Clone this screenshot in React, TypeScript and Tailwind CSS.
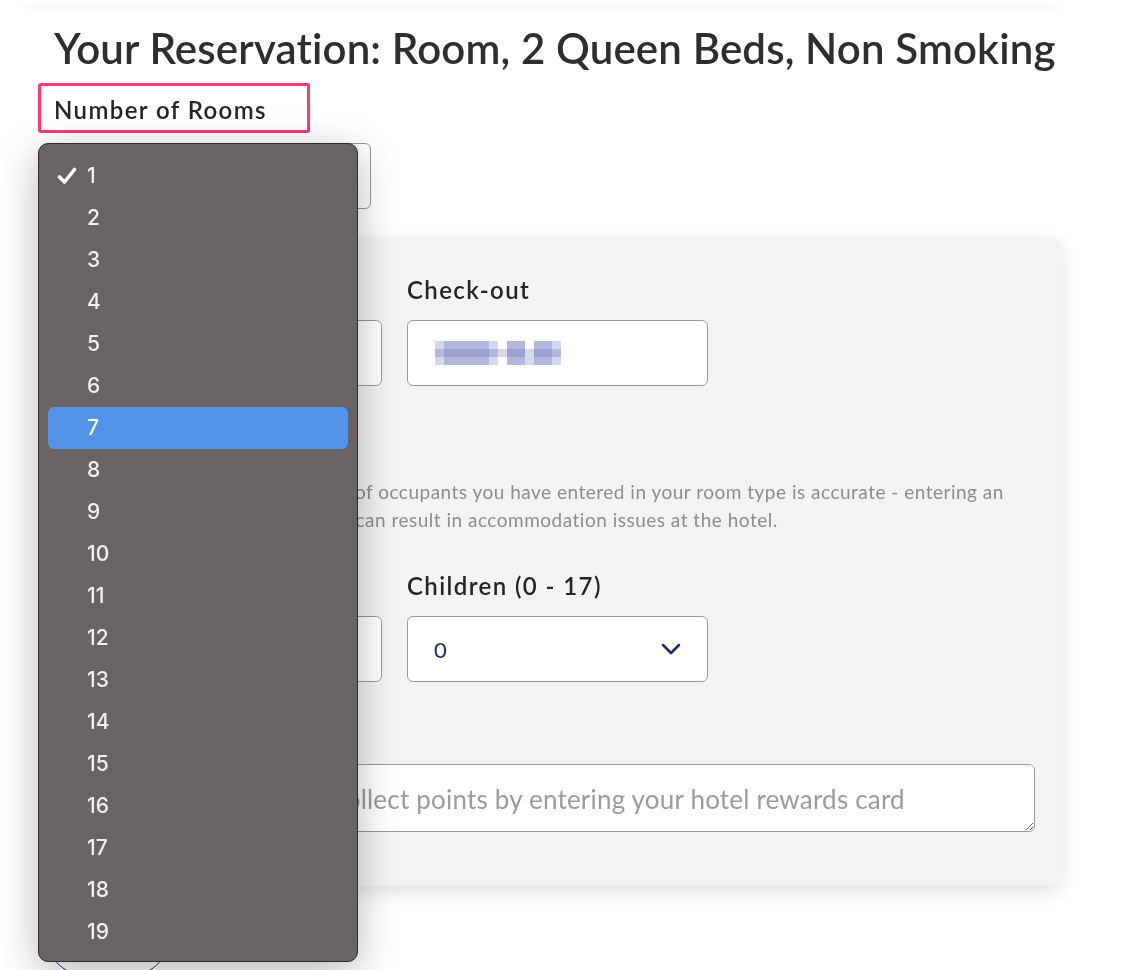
const rooms = Array.from({ length: 19 }, (_, i) => i + 1)

// mosaic used in place of the blurred check-out date
const mosaic = [
  [1, 2, 2, 2, 2, 2, 1, 0, 2, 2, 0, 2, 2, 1],
  [2, 3, 3, 3, 3, 3, 2, 1, 3, 3, 1, 3, 3, 2],
  [1, 2, 2, 2, 2, 2, 1, 0, 2, 2, 1, 2, 2, 1],
]
const shade = ["bg-transparent", "bg-[#d6d8ee]", "bg-[#b3b7de]", "bg-[#9ca1d1]"]

function Label({ children, className = "" }: { children: React.ReactNode; className?: string }) {
  return (
    <div className={"text-[24px] font-semibold leading-[28px] tracking-[1.4px] text-[#252525] " + className}>
      {children}
    </div>
  )
}

function Field({ label, children }: { label: string; children: React.ReactNode }) {
  return (
    <div className="w-[301px]">
      <Label>{label}</Label>
      <div className="mt-[16px]">{children}</div>
    </div>
  )
}

function Chevron() {
  return (
    <svg width="20" height="12" viewBox="0 0 20 12">
      <path d="M2 2 L10 10 L18 2" fill="none" stroke="#1f2a6b" strokeWidth="2.5" strokeLinecap="round" strokeLinejoin="round" />
    </svg>
  )
}

function RoomMenu() {
  return (
    <div className="absolute left-[38px] top-[143px] h-[819px] w-[320px] rounded-[10px] border border-[#2f2c2c] bg-[#696363] px-[9px] pt-[11px] font-['Inter',sans-serif] shadow-[0_10px_40px_rgba(0,0,0,0.28)]">
      {rooms.map((n) => (
        <div
          key={n}
          className={
            "relative flex h-[42px] items-center rounded-[6px] pl-[39px] text-[21px] font-medium text-[#f2efef] " +
            (n === 7 ? "bg-[#5394e8] text-white" : "")
          }
        >
          {n === 1 && (
            <svg className="absolute left-[9px] top-[12px]" width="20" height="18" viewBox="0 0 20 18">
              <path d="M2.5 10 L7.5 15 L17.5 2.5" fill="none" stroke="#fff" strokeWidth="3.6" strokeLinecap="round" strokeLinejoin="round" />
            </svg>
          )}
          {n}
        </div>
      ))}
    </div>
  )
}

export default function App() {
  return (
    <div className="relative h-[970px] overflow-hidden bg-white font-['Lato',sans-serif]">
      <div className="ml-[25px] h-[4px] w-[1035px] rounded-b-lg bg-white shadow-[0_4px_12px_rgba(0,0,0,0.08)]" />

      <div className="ml-[38px] w-[1024px]">
        <h1 className="mt-[20px] pl-4 text-[42px] font-semibold leading-[48px] tracking-[0.15px] text-[#2e2e2e]">
          Your Reservation: Room, 2 Queen Beds, Non Smoking
        </h1>

        <div className="mt-[11px] flex h-[50px] w-[272px] items-center rounded-[3px] border-[3px] border-[#fb3b76] pl-[13px] pt-[3px]">
          <Label className="text-[#222]">Number of Rooms</Label>
        </div>

        <div className="ml-4 mt-[10px] flex h-[66px] w-[317px] items-center rounded-[6px] border border-[#9a9a9a] bg-white px-[26px] text-[22px] text-[#1f2a6b]">
          1
        </div>

        <div className="ml-4 mt-[28px] w-[1008px] rounded-[12px] bg-[#f3f3f3] px-[27px] pb-[54px] pt-[39px] shadow-[0_6px_18px_rgba(0,0,0,0.12)]">
          <div className="flex gap-[25px]">
            <Field label="Check-in">
              <div className="h-[66px] rounded-[6px] border border-[#9a9a9a] bg-white" />
            </Field>
            <Field label="Check-out">
              <div className="flex h-[66px] items-center rounded-[6px] border border-[#9a9a9a] bg-white pl-[27px]">
                <div className="blur-[0.6px]">
                  {mosaic.map((row, r) => (
                    <div key={r} className="flex">
                      {row.map((c, i) => (
                        <div key={i} className={"h-[8px] w-[9px] " + shade[c]} />
                      ))}
                    </div>
                  ))}
                </div>
              </div>
            </Field>
          </div>

          <Label className="mt-[42px]">Guests per Room</Label>
          <div className="mt-[22px] text-[19px] leading-[28px] tracking-[0.5px] text-[#8c8c8c]">
            <div className="whitespace-nowrap">
              Please ensure that the number of occupants you have entered in your room type is accurate - entering an
            </div>
            <div className="whitespace-nowrap">
              incorrect number of occupants can result in accommodation issues at the hotel.
            </div>
          </div>

          <div className="mt-[38px] flex gap-[25px]">
            <Field label="Adults">
              <div className="flex h-[66px] items-center justify-between rounded-[6px] border border-[#9a9a9a] bg-white pl-[26px] pr-[26px] text-[22px] text-[#1f2a6b]">
                2
                <Chevron />
              </div>
            </Field>
            <Field label="Children (0 - 17)">
              <div className="flex h-[66px] items-center justify-between rounded-[6px] border border-[#9a9a9a] bg-white pl-[26px] pr-[26px] text-[22px] text-[#1f2a6b]">
                0
                <Chevron />
              </div>
            </Field>
          </div>

          <Label className="mt-[38px]">Rewards</Label>
          <textarea
            className="mt-[16px] block h-[68px] w-full resize-y rounded-[6px] border border-[#9a9a9a] bg-white px-[26px] py-[17px] text-[26px] leading-[34px] tracking-[0.2px] placeholder:text-[#9b9b9b]"
            placeholder="Member? Earn and collect points by entering your hotel rewards card"
          />
        </div>

        <div className="ml-[8px] mt-[10px] h-[80px] w-[124px] rounded-full border border-[#2a3370]" />
      </div>

      <RoomMenu />
    </div>
  )
}
